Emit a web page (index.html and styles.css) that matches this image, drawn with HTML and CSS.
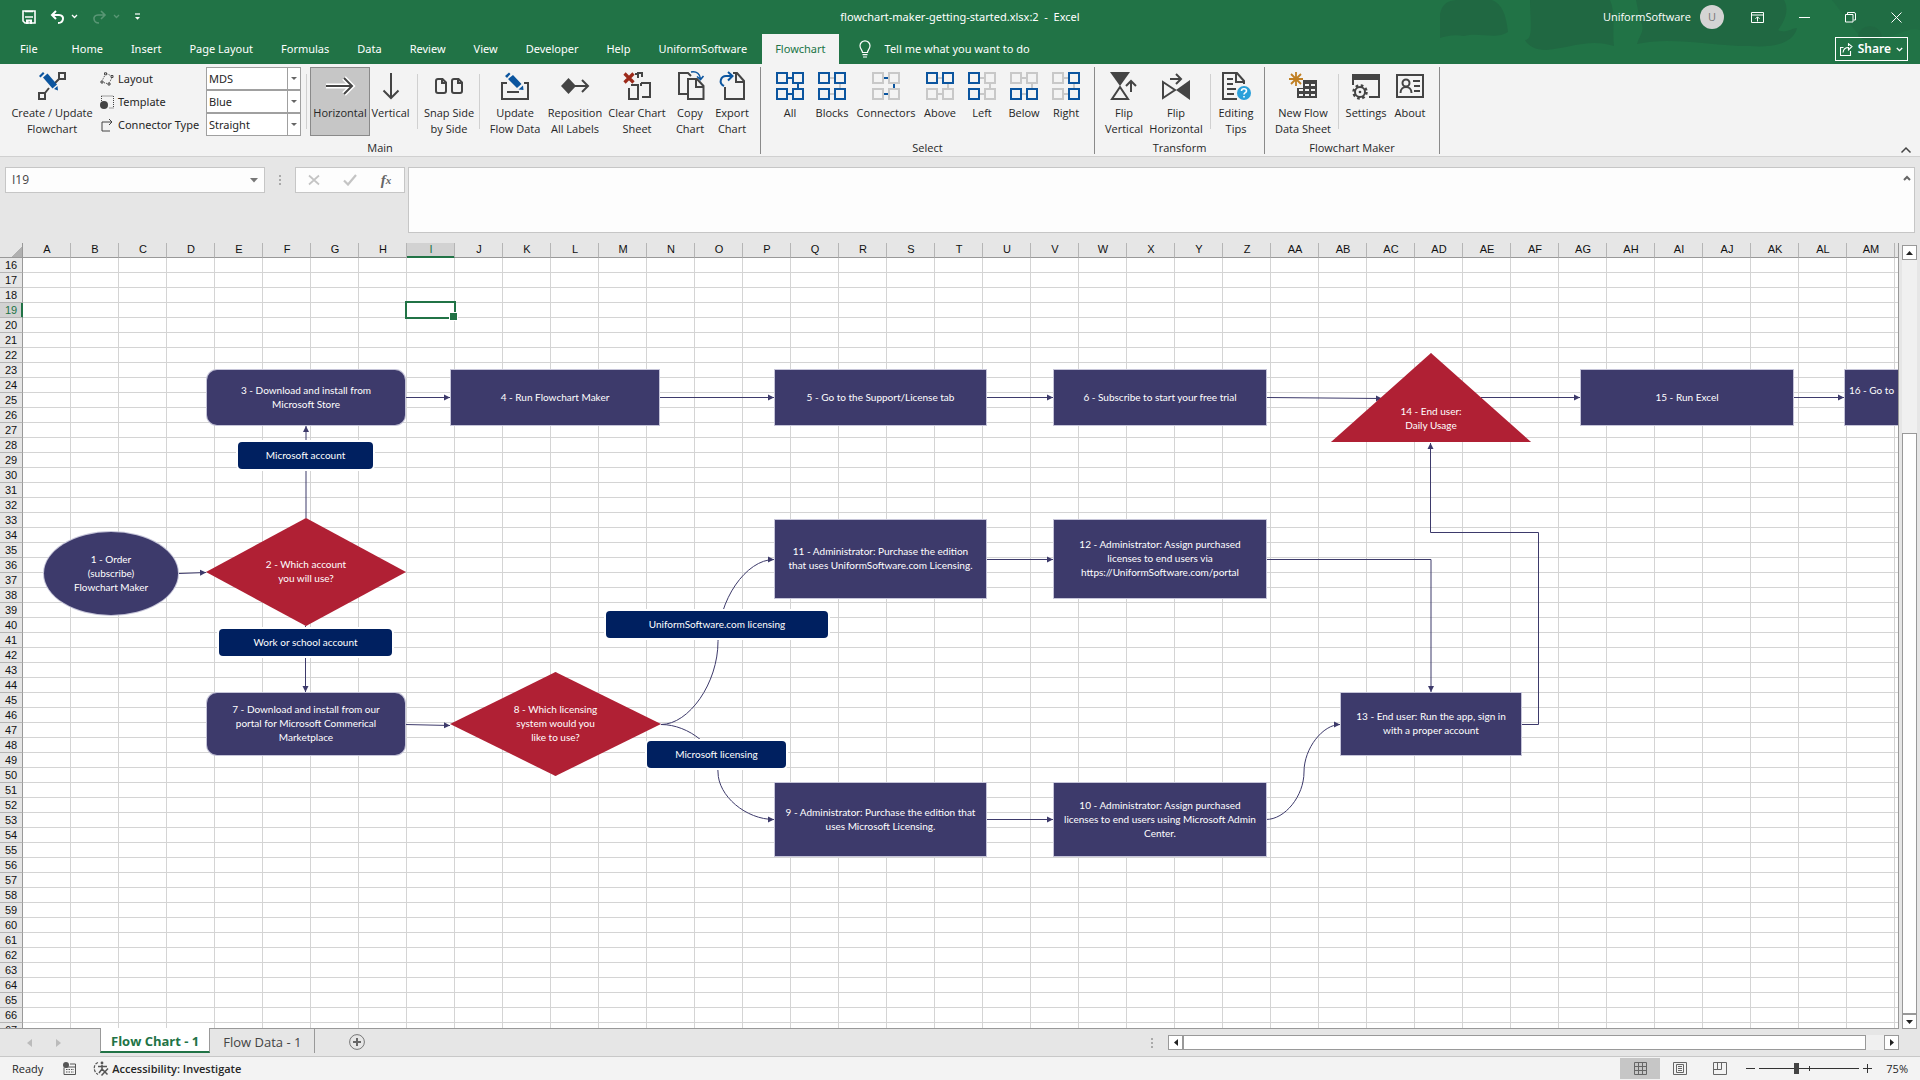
FILE: index.html
```html
<!DOCTYPE html>
<html lang="en">
<head>
  <meta charset="UTF-8">
  <meta name="viewport" content="width=device-width, initial-scale=1.0">
  <title>flowchart-maker-getting-started.xlsx:2 - Excel</title>
  <link rel="stylesheet" href="styles.css">
</head>
<body>
  <header class="top">
    <svg class="top-art" width="480" height="64" viewBox="0 0 480 64">
      <path d="M0 14C2 4 8 0 18 0H52C62 4 66 14 68 32C56 40 40 32 24 36C14 34 6 36 0 38Z"/>
      <path d="M90 0H170C176 14 172 30 174 46C150 38 130 48 106 50C96 50 88 46 85 40C94 40 90 20 90 0Z"/>
      <path d="M196 0H344C350 10 344 22 338 30C346 34 352 28 357 28C354 42 336 48 310 46C270 46 230 36 197 44C200 34 206 30 200 20Z"/>
      <path d="M392 0H480V30C466 26 454 40 440 36C436 24 424 24 418 34C408 22 400 10 392 0Z" opacity=".5"/>
      <path d="M418 36C420 24 438 22 442 36C440 40 424 42 418 36Z"/>
    </svg>
    <div class="titlebar">
      <div class="quick">
        <button aria-label="Save"><svg width="14" height="14" viewBox="0 0 14 14"><path d="M1 1h12v12H3l-2-2z" fill="none" stroke="#fff" stroke-width="1.6"/><path d="M3 1.5h8M3 7h8" stroke="#fff" stroke-width="1.4"/><path d="M4 9.5h6V14H8v-2.500H6.500V14H4z" fill="#fff"/></svg></button>
        <button aria-label="Undo"><svg width="28" height="14" viewBox="0 0 28 14"><path d="M6 1L2 5l4 4M2 5h7c6 0 5 8-1 8" fill="none" stroke="#fff" stroke-width="2"/><path d="M22 5l2.500 2.500L27 5" fill="none" stroke="#fff" stroke-width="1.300"/></svg></button>
        <button class="dim" aria-label="Redo"><svg width="28" height="14" viewBox="0 0 28 14"><path d="M9 1l4 4-4 4M13 5H6c-6 0-5 8 1 8" fill="none" stroke="#fff" stroke-width="1.600"/><path d="M22 5l2.500 2.500L27 5" fill="none" stroke="#fff" stroke-width="1.300"/></svg></button>
        <button aria-label="Customize Quick Access Toolbar"><svg width="7" height="8" viewBox="0 0 7 8"><path d="M1 1h5" stroke="#fff" stroke-width="1.200"/><path d="M1 4h5L3.500 6.800z" fill="#fff"/></svg></button>
      </div>
      <h1 class="title">flowchart-maker-getting-started.xlsx:2&nbsp; -&nbsp; Excel</h1>
      <div class="window">
        <span class="user">UniformSoftware</span>
        <span class="avatar">U</span>
        <button aria-label="Ribbon Display Options"><svg width="13" height="11" viewBox="0 0 13 11"><path d="M.5.5h12v10H.5zM.5 3h12M6.500 9.500V5M4.500 6.800l2-2 2 2" fill="none" stroke="#fff"/></svg></button>
        <button aria-label="Minimize"><svg width="11" height="11" viewBox="0 0 11 11"><path d="M0 5.500h11" stroke="#fff"/></svg></button>
        <button aria-label="Restore"><svg width="11" height="11" viewBox="0 0 11 11"><path d="M.5 2.500h7.500v7.500H.5zM2.500 2V.5H9q1.500 0 1.500 1.500v6H8.500" fill="none" stroke="#fff"/></svg></button>
        <button aria-label="Close"><svg width="11" height="11" viewBox="0 0 11 11"><path d="M.5.5l10 10M10.500.5l-10 10" stroke="#fff"/></svg></button>
      </div>
    </div>
    <nav class="tabs">
      <button class="file">File</button>
      <button>Home</button>
      <button>Insert</button>
      <button>Page Layout</button>
      <button>Formulas</button>
      <button>Data</button>
      <button>Review</button>
      <button>View</button>
      <button>Developer</button>
      <button>Help</button>
      <button>UniformSoftware</button>
      <button class="current">Flowchart</button>
      <button class="tell"><svg width="12" height="18" viewBox="0 0 12 18"><path d="M3.500 12.500C3.500 10 1 9 1 5.800a5 5 0 0 1 10 0C11 9 8.500 10 8.500 12.500zM3.500 14.700h5M4 17h4" fill="none" stroke="#fff" stroke-width="1.200"/></svg>Tell me what you want to do</button>
      <button class="share"><svg width="13" height="13" viewBox="0 0 13 13"><path d="M3.500 4.500h-3v8h10V8M3 9.500C3.500 6 5.500 4.500 8.500 4.500V7L12 3.500 8.500.8V3" fill="none" stroke="#fff" stroke-width="1.100"/></svg>Share<svg width="7" height="5" viewBox="0 0 7 5"><path d="M.8 1l2.700 2.700L6.200 1" fill="none" stroke="#fff" stroke-width="1.300"/></svg></button>
    </nav>
  </header>

  <section class="ribbon">
    <div class="group main">
      <div class="tools">
        <button class="tool"><svg viewBox="0 0 32 32"><path d="M23 4h6v6h-6zM3 24h6v6H3zM9 24l4-5M23 10l-5 5" class="ink"/><path d="M7 8.500l4.500-4 9.500 11-4.500 4z" fill="#0b559f"/><path d="M3 7l4-4 1.500 1.500-4 4zM21.500 17l-3.500 3 4 1.500z" fill="#0b559f"/></svg><span>Create / Update<br>Flowchart</span></button>
        <div class="options">
          <label for="layout"><svg viewBox="0 0 14 14"><path d="M4.500.8h2v2h-2zM11 3.500h2v2h-2zM1 9h2v2H1zM8 11h2v2H8z" class="ink thin"/><path d="M7.500 2l3 1.500M4.500 4L2.500 8M11.500 6.500l-2 4M4 10.700l3 .8" class="ink thin dash"/></svg>Layout</label>
          <div class="combo"><select id="layout"><option>MDS</option></select></div>
          <label for="template"><svg viewBox="0 0 14 14"><path d="M1.500 1h12v12H9M1.500 1v5" class="ink thin dash"/><circle cx="4" cy="10" r="4" fill="#444"/></svg>Template</label>
          <div class="combo"><select id="template"><option>Blue</option></select></div>
          <label for="connector"><svg viewBox="0 0 14 14"><path d="M10 13H2V4h10M9 1l3 3-3 3" class="ink thin"/></svg>Connector Type</label>
          <div class="combo"><select id="connector"><option>Straight</option></select></div>
        </div>
        <i class="sep"></i>
        <button class="tool pressed"><svg viewBox="0 0 32 32"><path d="M2 17h26M20 9l8 8-8 8" class="halo"/><path d="M2 17h26M20 9l8 8-8 8" class="ink"/></svg><span>Horizontal</span></button>
        <button class="tool"><svg viewBox="0 0 32 32"><path d="M16 4v25M8.500 21.500L16 29l7.500-7.500" class="ink"/></svg><span>Vertical</span></button>
        <i class="sep"></i>
        <button class="tool"><svg viewBox="0 0 32 32"><path d="M3 12q0-2 2-2h4.500l3.500 3.500V22q0 2-2 2H5q-2 0-2-2zM19 12q0-2 2-2h4.500l3.500 3.500V22q0 2-2 2h-6q-2 0-2-2z" class="ink"/><path d="M9 10v4h4M25 10v4h4" class="ink"/></svg><span>Snap Side<br>by Side</span></button>
        <i class="sep"></i>
        <button class="tool"><svg viewBox="0 0 32 32"><path d="M8 14H3v16h26V14h-4M8 23h12" class="ink"/><path d="M9 10l5-4 8.500 9-4.500 4zM6 7l4-3.500 1.500 1.500-3.500 4zM24 16.500L19.500 20.500l5 .5z" fill="#0b559f"/></svg><span>Update<br>Flow Data</span></button>
        <button class="tool"><svg viewBox="0 0 32 32"><path d="M2 17l7.500-8 7.500 8-7.500 8z" fill="#444"/><path d="M15 17h13M23 11l6 6-6 6" class="ink"/></svg><span>Reposition<br>All Labels</span></button>
        <button class="tool"><svg viewBox="0 0 32 32"><path d="M14 5h3v4M16 4h5v4M8 19v11h9V16h-5M20 14h9v14h-8M20 14v3M10 16h3" class="ink"/><path d="M3.500 4.500l9 9M12.500 4.500l-9 9" stroke="#9c2a1a" stroke-width="3.200"/></svg><span>Clear Chart<br>Sheet</span></button>
        <button class="tool"><svg viewBox="0 0 32 32"><path d="M14 25H5V4h9l3 3M14 10h9l6.500 7v13H14zM22 10v8h7" class="ink"/><path d="M17 3c6-1 9 2 9.500 7M23 7.500l3.500 3L29.500 7" fill="none" stroke="#0b559f" stroke-width="1.600"/></svg><span>Copy<br>Chart</span></button>
        <button class="tool"><svg viewBox="0 0 32 32"><path d="M17 4h4l7 8v18H9V18M20 4v9h8" class="ink"/><path d="M8 17c-6-3-3-10 2-10h6M12 3l4.500 4-4.500 4.500" fill="none" stroke="#0b559f" stroke-width="2"/></svg><span>Export<br>Chart</span></button>
      </div>
      <h2>Main</h2>
    </div>

    <div class="group selection">
      <div class="tools">
        <button class="tool"><svg viewBox="0 0 32 32"><path d="M3 4h10v10H3zM19 4h10v10H19zM3 20h10v10H3zM19 20h10v10H19zM13 9h6M13 25h6M24 14v6" class="on"/></svg><span>All</span></button>
        <button class="tool"><svg viewBox="0 0 32 32"><path d="M13 9h6M13 25h6M24 14v6" class="off"/><path d="M3 4h10v10H3zM19 4h10v10H19zM3 20h10v10H3zM19 20h10v10H19z" class="on"/></svg><span>Blocks</span></button>
        <button class="tool"><svg viewBox="0 0 32 32"><path d="M3 4h10v10H3zM19 4h10v10H19zM3 20h10v10H3zM19 20h10v10H19z" class="off"/><path d="M14 9h4M14 25h4M24 15v4" class="on"/></svg><span>Connectors</span></button>
        <button class="tool"><svg viewBox="0 0 32 32"><path d="M3 20h10v10H3zM19 20h10v10H19zM13 9h6M13 25h6M24 14v6" class="off"/><path d="M3 4h10v10H3zM19 4h10v10H19z" class="on"/></svg><span>Above</span></button>
        <button class="tool"><svg viewBox="0 0 32 32"><path d="M19 4h10v10H19zM19 20h10v10H19zM13 9h6M13 25h6M24 14v6" class="off"/><path d="M3 4h10v10H3zM3 20h10v10H3z" class="on"/></svg><span>Left</span></button>
        <button class="tool"><svg viewBox="0 0 32 32"><path d="M3 4h10v10H3zM19 4h10v10H19zM13 9h6M13 25h6M24 14v6" class="off"/><path d="M3 20h10v10H3zM19 20h10v10H19z" class="on"/></svg><span>Below</span></button>
        <button class="tool"><svg viewBox="0 0 32 32"><path d="M3 4h10v10H3zM3 20h10v10H3zM13 9h6M13 25h6M24 14v6" class="off"/><path d="M19 4h10v10H19zM19 20h10v10H19z" class="on"/></svg><span>Right</span></button>
      </div>
      <h2>Select</h2>
    </div>

    <div class="group transform">
      <div class="tools">
        <button class="tool"><svg viewBox="0 0 32 32"><path d="M2 3h20l-10 14z" fill="#444"/><path d="M12 18L4 30h16zM23 23V12M18 17l5-5 5 5" class="ink"/></svg><span>Flip<br>Vertical</span></button>
        <button class="tool"><svg viewBox="0 0 32 32"><path d="M30 11v20L16 21z" fill="#444"/><path d="M3 13v16l12-8zM10 10h11M16 5l5 5-5 5" class="ink"/></svg><span>Flip<br>Horizontal</span></button>
        <i class="sep"></i>
        <button class="tool"><svg viewBox="0 0 32 32"><path d="M17 30H3V4h14l7 8v3M16 4v9h8M7 10h6M7 15h6M7 20h9M7 25h7" class="ink"/><circle cx="24" cy="24" r="7" fill="#2aa0da"/><path d="M21.500 22c0-3 5-3 5 0 0 1.700-2.500 1.700-2.500 3.500M24 27v1.500" fill="none" stroke="#fff" stroke-width="1.600"/></svg><span>Editing<br>Tips</span></button>
      </div>
      <h2>Transform</h2>
    </div>

    <div class="group maker">
      <div class="tools">
        <button class="tool"><svg viewBox="0 0 32 32"><path d="M9 3v14M2 10h14M4 5l10 10M14 5L4 15" stroke="#c07f22" stroke-width="1.800"/><path d="M16 11h14v18H10V19h6z" fill="#444"/><path d="M12 20h4v2h-4zM18 20h4v2h-4zM24 20h4v2h-4zM12 25h4v2h-4zM18 25h4v2h-4zM24 25h4v2h-4z M18 15h4v2h-4zM24 15h4v2h-4z" fill="#f3f3f3"/></svg><span>New Flow<br>Data Sheet</span></button>
        <i class="sep"></i>
        <button class="tool"><svg viewBox="0 0 32 32"><path d="M2 5h28v6H2z" fill="#444"/><path d="M3 8v8M29 8v20H19" class="ink"/><circle cx="10" cy="23" r="6.500" fill="none" stroke="#444" stroke-width="2.500" stroke-dasharray="2.600 2.500"/><circle cx="10" cy="23" r="5" class="ink"/><circle cx="10" cy="23" r="1.300" fill="#444"/></svg><span>Settings</span></button>
        <button class="tool"><svg viewBox="0 0 32 32"><path d="M3 6h26v22H3zM19 12h7M20 17h6M20 22h6" class="ink"/><circle cx="12" cy="14" r="3.500" class="ink"/><path d="M6.500 24c0-8 11-8 11 0" class="ink"/></svg><span>About</span></button>
      </div>
      <h2>Flowchart Maker</h2>
    </div>
    <button class="collapse" aria-label="Collapse the Ribbon"><svg width="12" height="8" viewBox="0 0 12 8"><path d="M1.500 6.500L6 2l4.500 4.500" fill="none" stroke="#444" stroke-width="1.500"/></svg></button>
  </section>

  <section class="formula-bar">
    <div class="name-box">
      <input type="text" aria-label="Name Box" value="I19">
      <button aria-label="Name list"><svg width="8" height="5" viewBox="0 0 8 5"><path d="M0 0h8L4 4.500z" fill="#777"/></svg></button>
    </div>
    <svg class="grip" width="4" height="12" viewBox="0 0 4 12"><path d="M1 1h2v2H1zM1 5h2v2H1zM1 9h2v2H1z" fill="#aaa"/></svg>
    <div class="entry">
      <button aria-label="Cancel"><svg width="12" height="12" viewBox="0 0 12 12"><path d="M1 1.500l10 9M11 1.500l-10 9" stroke="#c4c4c4" stroke-width="1.700"/></svg></button>
      <button aria-label="Enter"><svg width="14" height="12" viewBox="0 0 14 12"><path d="M1 6.500l4 4L13 1" fill="none" stroke="#c4c4c4" stroke-width="2.200"/></svg></button>
      <button class="fx" aria-label="Insert Function">f<sub>x</sub></button>
    </div>
    <div class="formula">
      <textarea aria-label="Formula Bar"></textarea>
      <button aria-label="Collapse Formula Bar"><svg width="8" height="6" viewBox="0 0 8 6"><path d="M1 5l3-3 3 3" fill="none" stroke="#666" stroke-width="2"/></svg></button>
    </div>
  </section>

  <main class="workspace">
    <div class="sheet" id="sheet">
      <table class="grid" id="grid"></table>
      <div class="chart">
        <svg class="connectors" width="1875" height="772" viewBox="0 0 1875 772">
          <defs>
            <marker id="arrow" markerUnits="userSpaceOnUse" markerWidth="7" markerHeight="7" refX="6" refY="3.500" orient="auto"><path d="M0 .5l6 3-6 3z" fill="#3d3a6b"/></marker>
          </defs>
          <path d="M156 315.500L183 314.500"/>
          <path d="M283 260V168"/>
          <path d="M282.500 368V434"/>
          <path d="M382 139.500H427"/>
          <path d="M636 139.500H751"/>
          <path d="M964 139.500H1030"/>
          <path d="M1243 139.500L1359 140.500"/>
          <path d="M1458 139.500H1557"/>
          <path d="M1771 139.500H1821"/>
          <path d="M382 466.500L427 467.500"/>
          <path d="M638 466.500C666 466.500 695 425 695 383.500S723 301.500 751 301.500"/>
          <path d="M638 466.500C666 466.500 695 490 695 514S723 561.500 751 561.500"/>
          <path d="M964 301.500H1030"/>
          <path d="M964 561.500H1030"/>
          <path d="M1243 301.500H1408V434"/>
          <path d="M1243 561.500C1262 561.500 1281 538 1281 514S1300 466.500 1317 466.500"/>
          <path d="M1498 466.500H1515.500V274.500H1407.500V185"/>
        </svg>
        <div class="node oval n1">1 - Order<br>(subscribe)<br>Flowchart Maker</div>
        <div class="node diamond n2">2 - Which account<br>you will use?</div>
        <div class="node round n3">3 - Download and install from<br>Microsoft Store</div>
        <div class="node n4">4 - Run Flowchart Maker</div>
        <div class="node n5">5 - Go to the Support/License tab</div>
        <div class="node n6">6 - Subscribe to start your free trial</div>
        <div class="node round n7">7 - Download and install from our<br>portal for Microsoft Commerical<br>Marketplace</div>
        <div class="node diamond n8">8 - Which licensing<br>system would you<br>like to use?</div>
        <div class="node n9">9 - Administrator: Purchase the edition that<br>uses Microsoft Licensing.</div>
        <div class="node n10">10 - Administrator: Assign purchased<br>licenses to end users using Microsoft Admin<br>Center.</div>
        <div class="node n11">11 - Administrator: Purchase the edition<br>that uses UniformSoftware.com Licensing.</div>
        <div class="node n12">12 - Administrator: Assign purchased<br>licenses to end users via<br>https://UniformSoftware.com/portal</div>
        <div class="node n13">13 - End user: Run the app, sign in<br>with a proper account</div>
        <div class="node triangle n14">14 - End user:<br>Daily Usage</div>
        <div class="node n15">15 - Run Excel</div>
        <div class="node n16">16 - Go to<br>&nbsp;</div>
        <div class="tag t1">Microsoft account</div>
        <div class="tag t2">Work or school account</div>
        <div class="tag t3">UniformSoftware.com licensing</div>
        <div class="tag t4">Microsoft licensing</div>
      </div>
    </div>
    <div class="vscroll">
      <button aria-label="Scroll up"><svg width="7" height="4" viewBox="0 0 7 4"><path d="M0 4h7L3.500 0z" fill="#222"/></svg></button>
      <div class="vtrack"><div class="vthumb"></div></div>
      <button aria-label="Scroll down"><svg width="7" height="4" viewBox="0 0 7 4"><path d="M0 0h7L3.500 4z" fill="#222"/></svg></button>
    </div>
  </main>

  <div class="sheet-bar">
    <div class="sheet-nav">
      <button aria-label="Previous sheet"><svg width="5" height="8" viewBox="0 0 5 8"><path d="M5 0v8L0 4z" fill="#bbb"/></svg></button>
      <button aria-label="Next sheet"><svg width="5" height="8" viewBox="0 0 5 8"><path d="M0 0v8l5-4z" fill="#bbb"/></svg></button>
    </div>
    <button class="sheet-tab current">Flow Chart - 1</button>
    <button class="sheet-tab">Flow Data - 1</button>
    <button class="add" aria-label="New sheet"><svg width="16" height="16" viewBox="0 0 16 16"><circle cx="8" cy="8" r="7.400" fill="none" stroke="#777"/><path d="M8 4v8M4 8h8" stroke="#666" stroke-width="2"/></svg></button>
    <div class="hscroll">
      <svg class="grip" width="4" height="12" viewBox="0 0 4 12"><path d="M1 1h2v2H1zM1 5h2v2H1zM1 9h2v2H1z" fill="#aaa"/></svg>
      <button aria-label="Scroll left"><svg width="4" height="7" viewBox="0 0 4 7"><path d="M4 0v7L0 3.500z" fill="#222"/></svg></button>
      <div class="htrack"><div class="hthumb"></div></div>
      <button aria-label="Scroll right"><svg width="4" height="7" viewBox="0 0 4 7"><path d="M0 0v7l4-3.500z" fill="#222"/></svg></button>
    </div>
  </div>

  <footer class="status">
    <span class="ready">Ready</span>
    <svg width="13" height="13" viewBox="0 0 13 13"><path d="M1 5.500V12.500h11.500V2H7M1.500 5h11" fill="none" stroke="#555"/><path d="M3 7.500h8M3 10h8" stroke="#555" stroke-dasharray="1.500 1"/><circle cx="3" cy="3" r="3" fill="#555"/></svg>
    <button class="access"><svg width="17" height="15" viewBox="0 0 17 15"><path d="M5 1.500C1 3 0 8 3 12l2 1.500" fill="none" stroke="#555" stroke-width="1.200" stroke-dasharray="3 1.200"/><circle cx="9" cy="2" r="1.400" fill="#555"/><path d="M5 5.500h9M9 4v4l-3 4M8.500 7.500l6 6M15 7.500l-6.500 7" fill="none" stroke="#555" stroke-width="1.500"/></svg>Accessibility: Investigate</button>
    <div class="views">
      <button class="current" aria-label="Normal"><svg width="13" height="13" viewBox="0 0 13 13"><path d="M.5.5h12v12H.5zM.5 4.500h12M.5 8.500h12M4.500.5v12M8.500.5v12" fill="none" stroke="#666"/></svg></button>
      <button aria-label="Page Layout view"><svg width="14" height="13" viewBox="0 0 14 13"><path d="M.5.5h13v12H.5zM3.500 2.500h7v8h-7zM5 4.500h4M5 6.500h4M5 8.500h4" fill="none" stroke="#666"/></svg></button>
      <button aria-label="Page Break Preview"><svg width="14" height="13" viewBox="0 0 14 13"><path d="M.5.5h13v12H.5zM.5 7.500h8V.5M4.500.5v7" fill="none" stroke="#666"/></svg></button>
    </div>
    <div class="zoom">
      <button aria-label="Zoom Out"><svg width="9" height="9" viewBox="0 0 9 9"><path d="M0 4.500h9" stroke="#333"/></svg></button>
      <input type="range" aria-label="Zoom" min="0" max="100" value="37">
      <button aria-label="Zoom In"><svg width="9" height="9" viewBox="0 0 9 9"><path d="M0 4.500h9M4.500 0v9" stroke="#333"/></svg></button>
      <span class="percent">75%</span>
    </div>
  </footer>

  <script src="script.js"></script>
</body>
</html>
```
FILE: styles.css
```css
* {
  box-sizing: border-box;
}
body {
  margin: 0;
  height: 100vh;
  display: flex;
  flex-direction: column;
  overflow: hidden;
  background-color: #e6e6e6;
  font-family: 'Open Sans', 'Noto Sans', sans-serif;
  font-size: 11px;
  line-height: 16px;
  color: #262626;
}
button {
  display: flex;
  align-items: center;
  justify-content: center;
  padding: 0;
  border: none;
  background: none;
  font: inherit;
  color: inherit;
  white-space: nowrap;
}
h1, h2 {
  margin: 0;
  font-size: 11px;
  font-weight: normal;
}
svg {
  display: block;
  flex: none;
}

/* title bar and tabs */
.top {
  position: relative;
  background-color: #217346;
  color: white;
}
.top-art {
  position: absolute;
  right: 0;
  top: 0;
  fill: #206842;
}
.titlebar {
  position: relative;
  display: grid;
  grid-template-columns: 1fr auto 1fr;
  align-items: center;
  height: 34px;
}
.title {
  font-family: 'Noto Sans', sans-serif;
}
.quick {
  display: flex;
  align-items: center;
  gap: 14px;
  padding-left: 22px;
}
.dim {
  opacity: 0.25;
}
.window {
  display: flex;
  align-items: center;
  justify-content: flex-end;
  gap: 35px;
  padding-right: 18px;
}
.user {
  margin-right: -26px;
}
.avatar {
  width: 24px;
  height: 24px;
  border-radius: 50%;
  background-color: #d4d4d4;
  color: #777;
  line-height: 24px;
  text-align: center;
  margin-right: -8px;
}
.tabs {
  position: relative;
  display: flex;
  gap: 2px;
  height: 30px;
  padding-left: 7px;
  font-family: 'Noto Sans', sans-serif;
}
.tabs button {
  padding: 0 13px;
}
.tabs .file {
  margin-right: 6px;
}
.tabs .current {
  background-color: #f3f3f3;
  color: #217346;
}
.tabs .tell {
  gap: 14px;
  padding: 0 18px;
}
.tabs .share {
  margin: 3px 12px 3px auto;
  padding: 0 4px;
  gap: 5px;
  border: 1px solid white;
  font-size: 12px;
  font-weight: 600;
}

/* ribbon */
.ribbon {
  position: relative;
  display: flex;
  height: 93px;
  background-color: #f3f3f3;
  border-bottom: 1px solid #d0d0d0;
}
.group {
  display: flex;
  flex-direction: column;
  margin: 3px 0 2px;
  border-right: 1px solid #8a8a8a;
}
.group h2 {
  margin-top: 6px;
  line-height: 12px;
  text-align: center;
}
.tools {
  flex: none;
  display: grid;
  height: 69px;
}
.main .tools {
  padding-left: 4px;
  padding-right: 7px;
  grid-template-columns: 96px 202px 8px 60px 41px 13px 50px 11px 60px 60px 64px 42px 42px;
}
.selection .tools {
  padding: 0 7px 0 8px;
  grid-template-columns: 42px 42px 66px 42px 42px 42px 42px;
}
.transform .tools {
  padding: 0 9px 0 5px;
  grid-template-columns: 48px 56px 13px 38px;
}
.maker .tools {
  padding: 0 5px 0 10px;
  grid-template-columns: 56px 15px 40px 48px;
}
.tool {
  height: 69px;
  flex-direction: column;
  justify-content: flex-start;
  gap: 4px;
  padding-top: 2px;
}
.tool svg {
  width: 32px;
  height: 32px;
}
.pressed {
  background-color: #c6c6c6;
  border: 1px solid #8a8a8a;
  padding-top: 1px;
}
.sep {
  width: 1px;
  height: 55px;
  margin: 7px auto 0;
  background-color: #d0d0d0;
}
.ink {
  fill: none;
  stroke: #444;
  stroke-width: 2;
}
.thin {
  stroke-width: 1;
}
.dash {
  stroke-dasharray: 1 1;
}
.halo {
  fill: none;
  stroke: white;
  stroke-width: 5;
}
.on {
  fill: none;
  stroke: #0b559f;
  stroke-width: 2;
}
.off {
  fill: none;
  stroke: #c8c8c8;
  stroke-width: 2;
}
.options {
  display: grid;
  grid-template-columns: 106px 95px;
  grid-template-rows: 23px 23px 23px;
  font-family: 'Noto Sans', sans-serif;
}
.options label {
  display: flex;
  align-items: center;
  gap: 4px;
  white-space: nowrap;
}
.options label svg {
  width: 14px;
  height: 14px;
}
.combo {
  position: relative;
}
.combo::after {
  content: "";
  position: absolute;
  right: 4px;
  top: 10px;
  border: 3px solid transparent;
  border-top-color: #666;
  pointer-events: none;
}
.combo select {
  appearance: none;
  width: 95px;
  height: 23px;
  padding: 0 2px;
  border: 1px solid #a0a0a0;
  border-radius: 0;
  background: linear-gradient(#a0a0a0, #a0a0a0) no-repeat right 12px top / 1px 100% white;
  font: inherit;
  color: inherit;
}
.collapse {
  margin: auto 8px 2px auto;
}

/* formula bar */
.formula-bar {
  display: flex;
  align-items: flex-start;
  height: 86px;
  padding: 10px 5px;
}
.name-box, .entry {
  display: flex;
  height: 26px;
  border: 1px solid #c6c6c6;
  background-color: #fdfdfd;
}
.name-box {
  width: 260px;
}
.name-box input {
  flex: 1;
  min-width: 0;
  border: none;
  padding: 0 6px;
  background: none;
  font: inherit;
  font-size: 12px;
  color: #444;
}
.name-box button {
  width: 20px;
}
.grip {
  margin: 7px 13px;
}
.entry {
  width: 110px;
}
.entry button {
  flex: 1;
}
.entry .fx {
  font-family: 'Liberation Serif', serif;
  font-size: 15px;
  font-style: italic;
  font-weight: bold;
  color: #666;
}
.fx sub {
  font-size: 11px;
}
.formula {
  position: relative;
  flex: 1;
  height: 66px;
  margin-left: 3px;
}
.formula textarea {
  display: block;
  width: 100%;
  height: 100%;
  border: 1px solid #c6c6c6;
  background-color: #fdfdfd;
  resize: none;
}
.formula button {
  position: absolute;
  right: 4px;
  top: 8px;
}

/* worksheet */
.workspace {
  flex: 1;
  min-height: 0;
  display: flex;
  gap: 3px;
  padding-right: 3px;
}
.sheet {
  position: relative;
  flex: 1;
  min-width: 0;
  overflow: hidden;
  border-right: 1px solid #999;
  border-bottom: 1px solid #999;
}
.grid {
  table-layout: fixed;
  width: 0;
  border-collapse: separate;
  border-spacing: 0;
  background-color: white;
  font-family: 'Liberation Sans', sans-serif;
  font-size: 11px;
  line-height: 14px;
}
.grid th, .grid td {
  width: 48px;
  height: 15px;
  padding: 0;
  border-right: 1px solid #d4d4d4;
  border-bottom: 1px solid #d4d4d4;
}
.grid th {
  background-color: #e6e6e6;
  font-weight: normal;
  color: #111;
  border-color: #b5b5b5;
}
.grid thead th {
  padding-left: 1px;
  padding-bottom: 2px;
  line-height: 12px;
  border-bottom-color: #999;
}
.grid th:first-child {
  width: 23px;
  border-right-color: #999;
}
.grid .corner {
  background: linear-gradient(135deg, #e6e6e6 70%, #b0b0b0 70%);
}
.grid th.picked {
  background-color: #d2d2d2;
  color: #217346;
}
.grid thead th.picked {
  box-shadow: inset 0 -1px #217346;
  border-bottom-color: #217346;
}
.grid tbody th.picked {
  box-shadow: inset -1px 0 #217346;
  border-right-color: #217346;
}
.grid .active {
  position: relative;
}
.active::before {
  content: "";
  position: absolute;
  inset: -2px;
  border: 2px solid #217346;
}
.active::after {
  content: "";
  position: absolute;
  right: -4px;
  bottom: -4px;
  width: 7px;
  height: 7px;
  border: 1px solid white;
  background-color: #217346;
}

/* flowchart drawn over the cells */
.chart {
  position: absolute;
  top: 15px;
  left: 23px;
  right: 0;
  bottom: 0;
  overflow: hidden;
  font-family: Lato, sans-serif;
  font-size: 10px;
  line-height: 14px;
  color: white;
}
.connectors path {
  fill: none;
  stroke: #3d3a6b;
  marker-end: url(#arrow);
}
.connectors marker path {
  fill: #3d3a6b;
  stroke: none;
  marker-end: none;
}
.node, .tag {
  position: absolute;
  display: flex;
  align-items: center;
  justify-content: center;
  padding-bottom: 2px;
  text-align: center;
  white-space: nowrap;
}
.node {
  background-color: #3d3a6b;
  box-shadow: 0 0 0 1px #c5c4d8;
}
.oval {
  border-radius: 50%;
}
.round {
  border-radius: 10px;
}
.diamond {
  background-color: #b02034;
  clip-path: polygon(50% 0, 100% 50%, 50% 100%, 0 50%);
}
.triangle {
  background-color: #b02034;
  clip-path: polygon(50% 0, 100% 100%, 0 100%);
  padding-top: 42px;
}
.n1 { left: 21px; top: 274px; width: 134px; height: 83px; }
.n2 { left: 183px; top: 260px; width: 200px; height: 108px; }
.n3 { left: 184px; top: 112px; width: 198px; height: 55px; }
.n4 { left: 428px; top: 112px; width: 208px; height: 55px; }
.n5 { left: 752px; top: 112px; width: 211px; height: 55px; }
.n6 { left: 1031px; top: 112px; width: 212px; height: 55px; }
.n7 { left: 184px; top: 435px; width: 198px; height: 62px; }
.n8 { left: 427px; top: 414px; width: 211px; height: 104px; }
.n9 { left: 752px; top: 525px; width: 211px; height: 73px; }
.n10 { left: 1031px; top: 525px; width: 212px; height: 73px; }
.n11 { left: 752px; top: 262px; width: 211px; height: 78px; }
.n12 { left: 1031px; top: 262px; width: 212px; height: 78px; }
.n13 { left: 1318px; top: 435px; width: 180px; height: 62px; }
.n14 { left: 1308px; top: 95px; width: 200px; height: 89px; }
.n15 { left: 1558px; top: 112px; width: 212px; height: 55px; }
.n16 { left: 1822px; top: 112px; right: 0; height: 55px; }
.tag {
  height: 27px;
  border-radius: 4px;
  background-color: #002060;
  box-shadow: 0 0 0 2px white;
}
.t1 { left: 215px; top: 184px; width: 135px; }
.t2 { left: 196px; top: 371px; width: 173px; }
.t3 { left: 583px; top: 353px; width: 222px; }
.t4 { left: 624px; top: 483px; width: 139px; }

/* scrollbars */
.vscroll {
  display: flex;
  flex-direction: column;
  width: 15px;
  padding-top: 2px;
}
.vscroll button, .hscroll button {
  width: 15px;
  height: 15px;
  border: 1px solid #999;
  background-color: white;
}
.vtrack {
  flex: 1;
  display: flex;
  background-color: #f0f0f0;
}
.vthumb {
  width: 15px;
  height: 77%;
  margin-top: auto;
  border: 1px solid #999;
  background-color: white;
}
.hscroll {
  display: flex;
  align-items: center;
  width: 39%;
  margin-left: auto;
  margin-right: 21px;
}
.hscroll .grip {
  margin: 0 14px 0 auto;
}
.htrack {
  flex: 1;
  height: 15px;
  padding-right: 18px;
  background-color: #f0f0f0;
}
.hthumb {
  height: 15px;
  border: 1px solid #999;
  background-color: white;
}

/* sheet tabs */
.sheet-bar {
  display: flex;
  height: 27px;
}
.sheet-nav {
  display: flex;
  align-items: center;
  gap: 24px;
  width: 100px;
  padding-left: 27px;
}
.sheet-tab {
  height: 24px;
  padding: 2px 13px 0;
  font-size: 13px;
  color: #444;
}
.sheet-tab.current {
  position: relative;
  height: 25px;
  margin-top: -1px;
  padding: 3px 10px 0;
  border: 1px solid #999;
  border-top: none;
  border-bottom: 2px solid #217346;
  background-color: white;
  font-weight: bold;
  color: #217346;
}
.add {
  height: 24px;
  padding: 2px 0 0 34px;
  border-left: 1px solid #999;
}

/* status bar */
.status {
  display: flex;
  align-items: center;
  height: 24px;
  padding: 0 12px;
  border-top: 1px solid #c8c8c8;
  background-color: #f3f3f3;
}
.ready {
  margin-right: 20px;
}
.access {
  gap: 2px;
  margin-left: 17px;
  font-weight: 600;
}
.views {
  display: flex;
  margin-left: auto;
}
.views button {
  width: 40px;
  height: 21px;
}
.views .current {
  background-color: #c6c6c6;
}
.zoom {
  display: flex;
  align-items: center;
  gap: 4px;
  padding-left: 6px;
}
.zoom input {
  appearance: none;
  width: 100px;
  height: 12px;
  margin: 0;
  background:
    linear-gradient(#333, #333) no-repeat center / 1px 5px,
    linear-gradient(#333, #333) no-repeat center / 100% 1px;
}
.zoom input::-webkit-slider-thumb {
  appearance: none;
  width: 5px;
  height: 11px;
  background-color: #444;
}
.percent {
  margin-left: 10px;
}
```
FILE: script.js
```js
const FIRST_ROW = 16;
const LAST_ROW = 67;
const ACTIVE_ROW = 19;
const ACTIVE_COLUMN = 'I';
const CELL_WIDTH = 48;
const HEADER_WIDTH = 23;

function columnName(index) {
  const letter = String.fromCharCode(65 + index % 26);
  const lead = Math.floor(index / 26);
  return lead === 0 ? letter : String.fromCharCode(64 + lead) + letter;
}

function headerCell(row, text, picked) {
  const th = document.createElement('th');
  th.textContent = text;
  if (picked) th.className = 'picked';
  row.appendChild(th);
  return th;
}

// fill the sheet; the last column is only partly visible and gets no letter
const room = document.getElementById('sheet').clientWidth - HEADER_WIDTH;
const fullColumns = Math.floor(room / CELL_WIDTH);
const columns = fullColumns + 1;

const grid = document.getElementById('grid');
const head = grid.createTHead().insertRow();
headerCell(head, '', false).className = 'corner';
for (let c = 0; c < columns; c++) {
  headerCell(head, c < fullColumns ? columnName(c) : '', columnName(c) === ACTIVE_COLUMN);
}

const body = grid.createTBody();
for (let r = FIRST_ROW; r <= LAST_ROW; r++) {
  const row = body.insertRow();
  headerCell(row, r, r === ACTIVE_ROW);
  for (let c = 0; c < columns; c++) {
    const cell = row.insertCell();
    if (r === ACTIVE_ROW && columnName(c) === ACTIVE_COLUMN) cell.className = 'active';
  }
}
```
